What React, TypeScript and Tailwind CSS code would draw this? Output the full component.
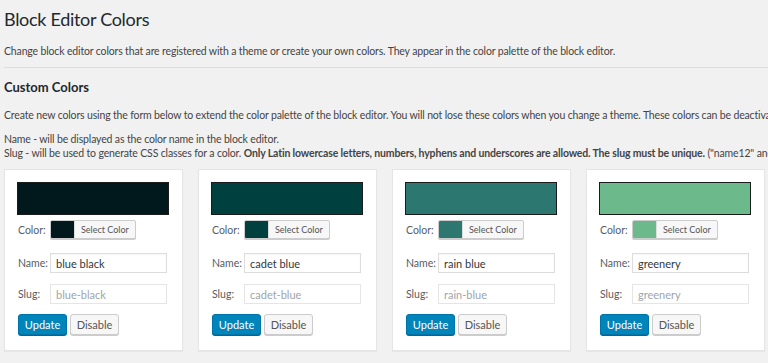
import React from 'react'

type ColorItem = {
  name: string
  slug: string
  hex: string
}

const COLORS: ColorItem[] = [
  { name: 'blue black', slug: 'blue-black', hex: '#01191c' },
  { name: 'cadet blue', slug: 'cadet-blue', hex: '#00403e' },
  { name: 'rain blue', slug: 'rain-blue', hex: '#2c7870' },
  { name: 'greenery', slug: 'greenery', hex: '#6cb98b' },
]

export default function App() {
  return (
    <div
      className="min-h-screen overflow-hidden bg-[#f1f1f1] pl-[4px] text-[10.5px] leading-[14px] tracking-[-0.15px] text-[#444]"
      style={{ fontFamily: 'Lato, "Open Sans", sans-serif' }}
    >
      {/* Page title */}
      <h1 className="pt-[7px] text-[18px] leading-[25px] font-normal tracking-[-0.3px] text-[#23282d]">
        Block Editor Colors
      </h1>
      <p className="mt-[12px] whitespace-nowrap">
        Change block editor colors that are registered with a theme or create your own colors. They appear in the color palette of the block editor.
      </p>
      <div className="mt-[9px] h-px bg-[#dddddd]"></div>

      {/* Custom colors section */}
      <h2 className="mt-[10px] text-[13px] leading-[18px] font-bold tracking-normal text-[#23282d]">
        Custom Colors
      </h2>
      <p className="mt-[12px] whitespace-nowrap">
        Create new colors using the form below to extend the color palette of the block editor. You will not lose these colors when you change a theme. These colors can be deactivated or deleted at any time.
      </p>
      <p className="mt-[10px] whitespace-nowrap">
        Name - will be displayed as the color name in the block editor.
        <br />
        Slug - will be used to generate CSS classes for a color.{' '}
        <span className="font-bold">
          Only Latin lowercase letters, numbers, hyphens and underscores are allowed. The slug must be unique.
        </span>{' '}
        ("name12" and "name-12" are valid slugs.)
      </p>

      {/* Color cards */}
      <div className="mt-[9px] flex gap-[15px] tracking-normal">
        {COLORS.map((color) => (
          <ColorCard key={color.slug} color={color} />
        ))}
      </div>
    </div>
  )
}

function ColorCard({ color }: { color: ColorItem }) {
  return (
    <div className="w-[179px] shrink-0 border border-[#e5e5e5] bg-white px-[12px] pt-[12px] pb-[15px] shadow-[0_1px_1px_rgba(0,0,0,0.04)]">
      {/* Swatch */}
      <div className="h-[33px] w-[152px] border border-[#1b1b1b]" style={{ backgroundColor: color.hex }}></div>

      {/* Color picker */}
      <div className="mt-[5px] flex items-center">
        <span className="w-[33px] shrink-0 pl-px text-[#555d66]">Color:</span>
        <button className="flex h-[19px] items-stretch overflow-hidden rounded-[2px] border border-[#cccccc] bg-[#f7f7f7] shadow-[0_1px_0_#cccccc]">
          <span className="w-[23px]" style={{ backgroundColor: color.hex }}></span>
          <span className="flex items-center border-l border-[#dddddd] px-[6px] text-[9px] leading-none text-[#555]">
            Select Color
          </span>
        </button>
      </div>

      {/* Name */}
      <div className="mt-[14px] flex items-center">
        <span className="w-[33px] shrink-0 pl-px text-[#555d66]">Name:</span>
        <input
          readOnly
          value={color.name}
          className="h-[20px] w-[117px] border border-[#dddddd] bg-white px-[5px] text-[11px] text-[#32373c] shadow-[inset_0_1px_2px_rgba(0,0,0,0.04)] outline-none"
        />
      </div>

      {/* Slug */}
      <div className="mt-[11px] flex items-center">
        <span className="w-[33px] shrink-0 pl-px text-[#555d66]">Slug:</span>
        <input
          readOnly
          value={color.slug}
          className="h-[20px] w-[117px] border border-[#e5e5e5] bg-white px-[5px] text-[11px] text-[#a0a5aa] outline-none"
        />
      </div>

      {/* Actions */}
      <div className="mt-[10px] flex gap-[3px] pl-px">
        <button className="h-[21px] w-[49px] rounded-[3px] border border-[#0073aa] bg-[#0085ba] text-[11px] text-white shadow-[0_1px_0_#006799]">
          Update
        </button>
        <button className="h-[21px] w-[49px] rounded-[3px] border border-[#cccccc] bg-[#f7f7f7] text-[11px] text-[#555] shadow-[0_1px_0_#cccccc]">
          Disable
        </button>
      </div>
    </div>
  )
}
